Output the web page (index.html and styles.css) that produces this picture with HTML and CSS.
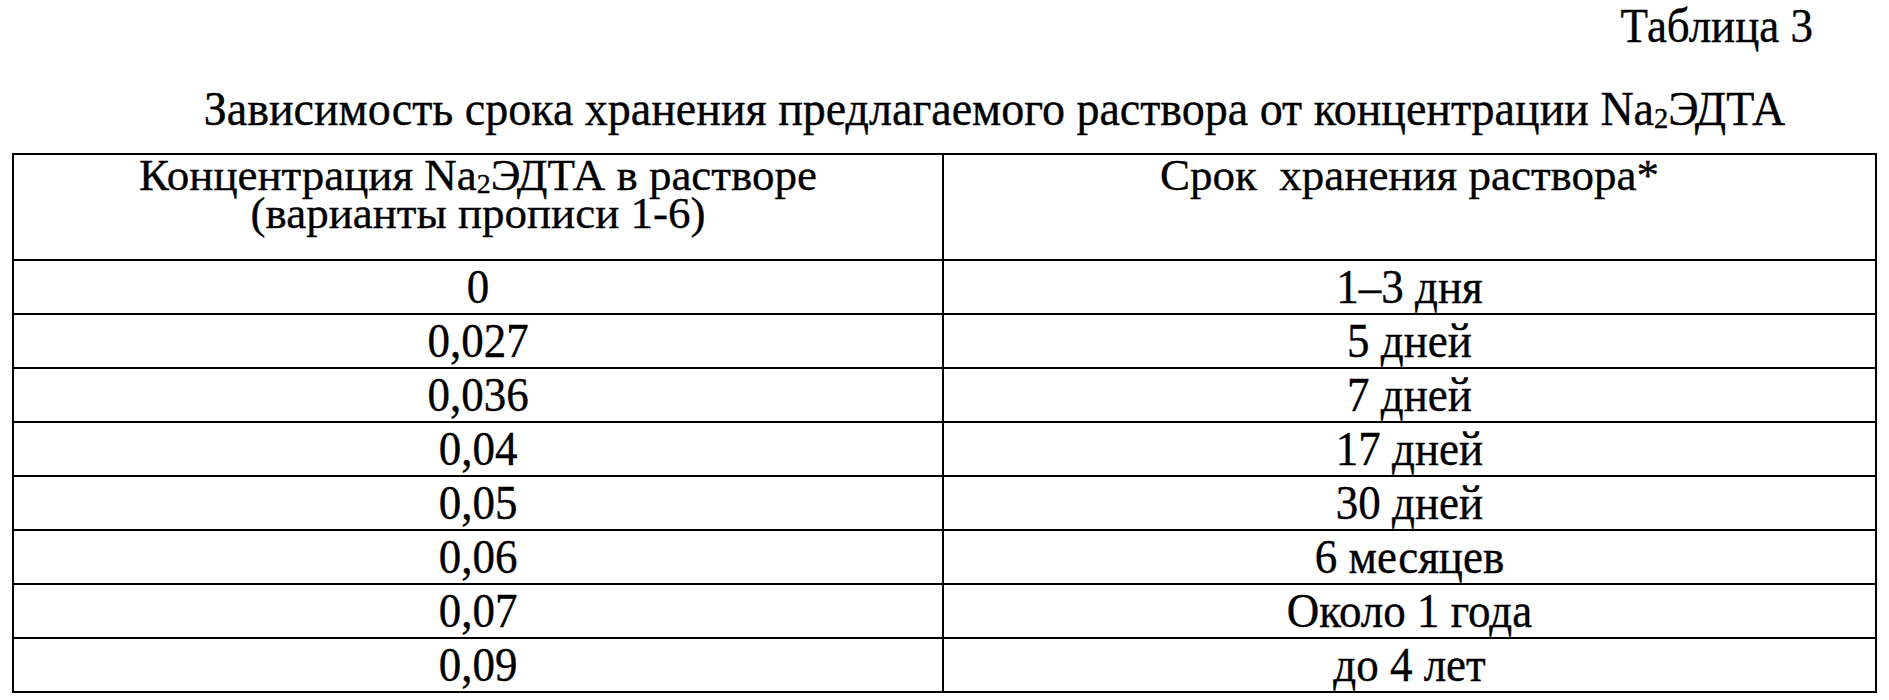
FILE: index.html
```html
<!DOCTYPE html>
<html lang="ru">
<head>
<meta charset="utf-8">
<title>Таблица 3</title>
<link rel="stylesheet" href="styles.css">
</head>
<body>
<div class="page">
  <div class="table-no"><span class="t">Таблица 3</span></div>
  <div class="caption"><span class="t">Зависимость срока хранения предлагаемого раствора от концентрации Na<span class="sub">2</span>ЭДТА</span></div>
  <table class="data">
    <thead>
      <tr class="head">
        <th class="col-a"><span class="h">Концентрация Na<span class="sub">2</span>ЭДТА в растворе</span><span class="h">(варианты прописи 1-6)</span></th>
        <th class="col-b"><span class="h">Срок&nbsp; хранения раствора*</span></th>
      </tr>
    </thead>
    <tbody>
      <tr><td><span class="t">0</span></td><td><span class="t">1–3 дня</span></td></tr>
      <tr><td><span class="t">0,027</span></td><td><span class="t">5 дней</span></td></tr>
      <tr><td><span class="t">0,036</span></td><td><span class="t">7 дней</span></td></tr>
      <tr><td><span class="t">0,04</span></td><td><span class="t">17 дней</span></td></tr>
      <tr><td><span class="t">0,05</span></td><td><span class="t">30 дней</span></td></tr>
      <tr><td><span class="t">0,06</span></td><td><span class="t">6 месяцев</span></td></tr>
      <tr><td><span class="t">0,07</span></td><td><span class="t">Около 1 года</span></td></tr>
      <tr><td><span class="t">0,09</span></td><td><span class="t">до 4 лет</span></td></tr>
    </tbody>
  </table>
</div>
</body>
</html>
```
FILE: styles.css
```css
html, body {
  margin: 0;
  padding: 0;
  background: #fff;
}
body {
  font-family: "Liberation Serif", "Times New Roman", serif;
  color: #000;
}
.page {
  width: 1889px;
  padding-top: 1px;
}
.t {
  display: inline-block;
  transform: scaleY(1.06);
  -webkit-text-stroke: 0.35px #000;
}
.h {
  display: block;
  -webkit-text-stroke: 0.35px #000;
}
.table-no {
  font-size: 45px;
  line-height: 52px;
  margin-top: -1px;
  text-align: right;
  padding-right: 76px;
}
.caption {
  font-size: 46px;
  line-height: 52px;
  margin-top: 31px;
  padding-left: 100px;
  text-align: center;
}
.sub {
  font-size: 0.62em;
  vertical-align: -0.1em;
  line-height: 0;
}
.data {
  margin: 18px 0 0 12px;
  width: 1865px;
  border-collapse: collapse;
  table-layout: fixed;
}
.data th, .data td {
  border: 2px solid #000;
  font-size: 45px;
  font-weight: normal;
  text-align: center;
  padding: 0;
}
.data th {
  height: 106px;
  line-height: 38px;
  vertical-align: top;
  padding-top: 1px;
  box-sizing: border-box;
}
.col-a {
  width: 930px;
}
.data td {
  height: 52px;
  line-height: 52px;
  vertical-align: middle;
}
```
